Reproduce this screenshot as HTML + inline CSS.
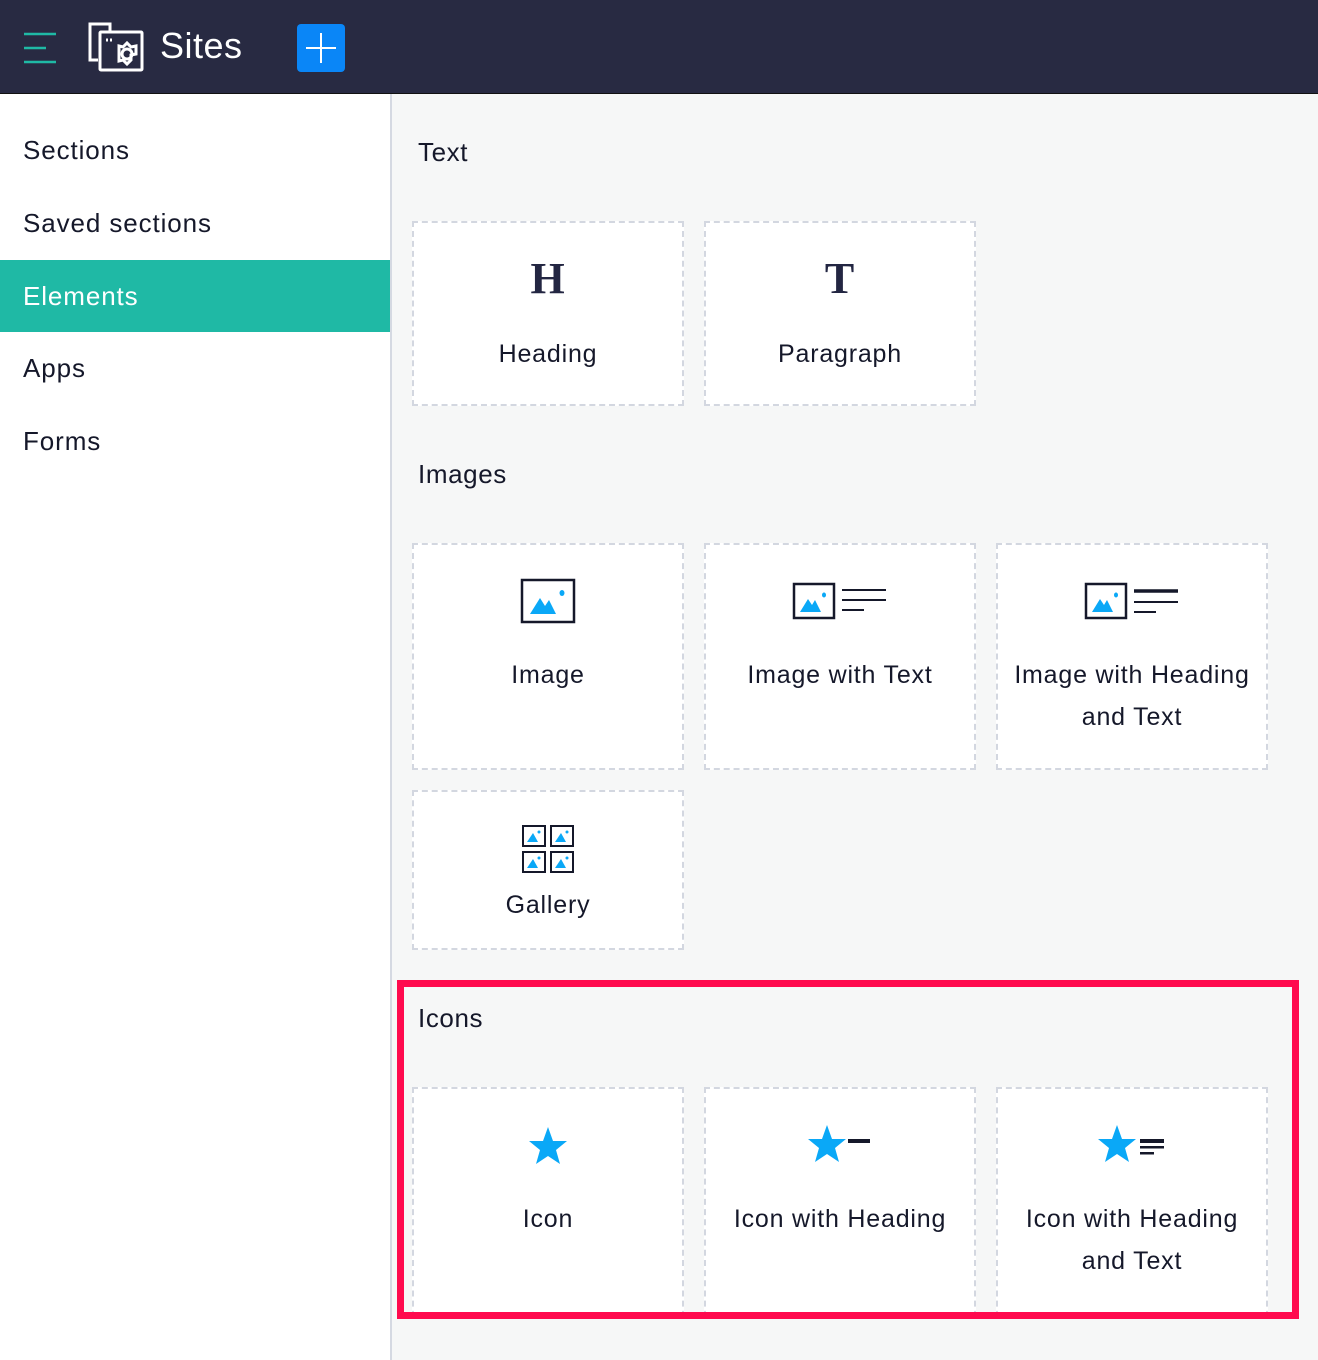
<!DOCTYPE html>
<html><head><meta charset="utf-8"><style>
*{margin:0;padding:0;box-sizing:border-box}
body{width:1318px;height:1360px;position:relative;overflow:hidden;background:#fff;font-family:"Liberation Sans",sans-serif;color:#15182a}
.hdr{position:absolute;left:0;top:0;width:1318px;height:94px;background:#282a42;border-bottom:1px solid #111}
.side{position:absolute;left:0;top:94px;width:392px;height:1266px;background:#fff;border-right:2px solid #d5d9e2}
.side div{position:absolute;left:23px;font-size:26px;line-height:30px;letter-spacing:0.9px}
.main{position:absolute;left:392px;top:94px;width:926px;height:1266px;background:#f6f7f7}
.h{position:absolute;left:418px;font-size:26px;line-height:30px;letter-spacing:0.6px}
.card{position:absolute;width:272px;background:#fff;border:2px dashed #d3d7e0;text-align:center;font-size:25px;line-height:42px;letter-spacing:0.8px}
.card .lbl{position:absolute;left:0;right:0}
.card svg{position:absolute;left:50%;transform:translateX(-50%)}
.red{position:absolute;left:397px;top:980px;width:902px;height:339px;border:7px solid #ff0a4e}
</style></head><body>
<div class="hdr">
 <svg style="position:absolute;left:22px;top:32px" width="36" height="32"><g stroke="#1fb9a5" stroke-width="2.5"><line x1="2" y1="2" x2="34" y2="2"/><line x1="2" y1="16" x2="24" y2="16"/><line x1="2" y1="30" x2="34" y2="30"/></g></svg>
 <svg style="position:absolute;left:86px;top:20px" width="60" height="52" fill="none" stroke="#fff" stroke-width="3"><path d="M24 12V4H4v36h8"/><rect x="14" y="12" width="42" height="38" rx="1"/><line x1="20" y1="20" x2="26" y2="20" stroke-dasharray="2 2"/><circle cx="41" cy="34" r="5"/><path d="M33 26l4 1 4-4 4 4 5-1v8l-5 1v5l-4 4-4-4-4 1z"/></svg>
 <div style="position:absolute;left:160px;top:26px;color:#fff;font-size:36px;line-height:40px;letter-spacing:0.5px">Sites</div>
 <div style="position:absolute;left:297px;top:24px;width:48px;height:48px;background:#0a86f7;border-radius:4px"><svg width="48" height="48"><g stroke="#fff" stroke-width="2"><line x1="24" y1="9" x2="24" y2="39"/><line x1="9" y1="24" x2="39" y2="24"/></g></svg></div>
</div>
<div class="side">
 <div style="top:41px">Sections</div>
 <div style="top:114px">Saved sections</div>
 <div style="left:0;top:166px;width:390px;height:72px;background:#1fb9a5"></div>
 <div style="top:187px;color:#fff">Elements</div>
 <div style="top:259px">Apps</div>
 <div style="top:332px">Forms</div>
</div>
<div class="main"></div>
<div class="h" style="top:137px">Text</div>
<div class="card" style="left:412px;top:221px;height:185px"><div style="position:absolute;left:0;right:0;top:28px;font-family:'Liberation Serif',serif;font-weight:bold;font-size:44px;line-height:56px;color:#232642">H</div><div class="lbl" style="top:110px">Heading</div></div>
<div class="card" style="left:704px;top:221px;height:185px"><div style="position:absolute;left:0;right:0;top:28px;font-family:'Liberation Serif',serif;font-weight:bold;font-size:44px;line-height:56px;color:#232642">T</div><div class="lbl" style="top:110px">Paragraph</div></div>
<div class="h" style="top:459px">Images</div>
<div class="card" style="left:412px;top:543px;height:227px"><svg style="top:33px" width="56" height="46"><rect x="2" y="2" width="52" height="42" fill="none" stroke="#15182a" stroke-width="2.5"/><path d="M10 36l10-16 5 8 4-6 7 14z" fill="#0aa8f7"/><ellipse cx="42" cy="15" rx="2.5" ry="3" fill="#0aa8f7"/></svg><div class="lbl" style="top:109px">Image</div></div>
<div class="card" style="left:704px;top:543px;height:227px"><svg style="top:37px" width="96" height="40"><rect x="2" y="2" width="40" height="34" fill="none" stroke="#15182a" stroke-width="2.5"/><path d="M8 30l8-13 4 6 3-5 6 12z" fill="#0aa8f7"/><ellipse cx="32" cy="13" rx="2" ry="2.5" fill="#0aa8f7"/><g stroke="#15182a" stroke-width="2"><line x1="50" y1="8" x2="94" y2="8"/><line x1="50" y1="18" x2="94" y2="18"/><line x1="50" y1="28" x2="72" y2="28"/></g></svg><div class="lbl" style="top:109px">Image with Text</div></div>
<div class="card" style="left:996px;top:543px;height:227px"><svg style="top:37px" width="96" height="40"><rect x="2" y="2" width="40" height="34" fill="none" stroke="#15182a" stroke-width="2.5"/><path d="M8 30l8-13 4 6 3-5 6 12z" fill="#0aa8f7"/><ellipse cx="32" cy="13" rx="2" ry="2.5" fill="#0aa8f7"/><g stroke="#15182a"><line x1="50" y1="9" x2="94" y2="9" stroke-width="3.5"/><line x1="50" y1="20" x2="94" y2="20" stroke-width="2"/><line x1="50" y1="30" x2="72" y2="30" stroke-width="2"/></g></svg><div class="lbl" style="top:109px;line-height:42px">Image with Heading<br>and Text</div></div>
<div class="card" style="left:412px;top:790px;height:160px"><svg style="top:32px" width="54" height="50"><g fill="none" stroke="#15182a" stroke-width="2"><rect x="2" y="2" width="22" height="20"/><rect x="30" y="2" width="22" height="20"/><rect x="2" y="28" width="22" height="20"/><rect x="30" y="28" width="22" height="20"/></g><g fill="#0aa8f7"><path d="M6 18l6-9 5 9z"/><path d="M34 18l6-9 5 9z"/><path d="M6 44l6-9 5 9z"/><path d="M34 44l6-9 5 9z"/><circle cx="18" cy="8" r="1.5"/><circle cx="46" cy="8" r="1.5"/><circle cx="18" cy="34" r="1.5"/><circle cx="46" cy="34" r="1.5"/></g></svg><div class="lbl" style="top:92px">Gallery</div></div>
<div class="h" style="top:1003px">Icons</div>
<div class="card" style="left:412px;top:1087px;height:240px"><svg style="top:36px" width="42" height="40"><path d="M21 2l5 14h14l-11 9 4 14-12-8-12 8 4-14-11-9h14z" fill="#0aa8f7"/></svg><div class="lbl" style="top:109px">Icon</div></div>
<div class="card" style="left:704px;top:1087px;height:240px"><svg style="top:34px" width="68" height="40"><path d="M21 2l5 14h14l-11 9 4 14-12-8-12 8 4-14-11-9h14z" fill="#0aa8f7"/><rect x="42" y="16" width="22" height="4" fill="#15182a"/></svg><div class="lbl" style="top:109px">Icon with Heading</div></div>
<div class="card" style="left:996px;top:1087px;height:240px"><svg style="top:34px" width="72" height="40"><path d="M21 2l5 14h14l-11 9 4 14-12-8-12 8 4-14-11-9h14z" fill="#0aa8f7"/><g fill="#15182a"><rect x="44" y="16" width="24" height="4"/><rect x="44" y="23" width="24" height="2.5"/><rect x="44" y="29" width="14" height="2.5"/></g></svg><div class="lbl" style="top:109px">Icon with Heading<br>and Text</div></div>
<div style="position:absolute;left:392px;top:1319px;width:926px;height:41px;background:#f6f7f7"></div>
<div class="red"></div>
</body></html>
